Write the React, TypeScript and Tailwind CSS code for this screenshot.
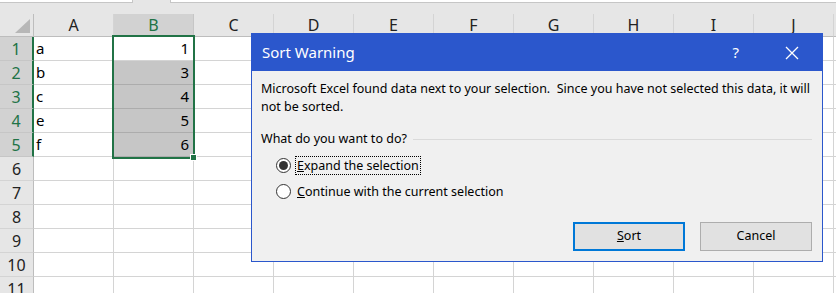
import React from "react";

const cols = ["A", "B", "C", "D", "E", "F", "G", "H", "I", "J", ""];
const rows = [1, 2, 3, 4, 5, 6, 7, 8, 9, 10, 11];

const cellData: Record<number, { a: string; b: string }> = {
  1: { a: "a", b: "1" },
  2: { a: "b", b: "3" },
  3: { a: "c", b: "4" },
  4: { a: "e", b: "5" },
  5: { a: "f", b: "6" },
};

const font = { fontFamily: '"Noto Sans", "Open Sans", sans-serif' };

function Corner() {
  return (
    <div className="relative h-full w-[34px] shrink-0 border-r border-b border-[#bdbdbd] bg-[#e6e6e6]">
      <svg className="absolute left-[15px] top-[5px]" width="15" height="14" viewBox="0 0 15 14">
        <polygon points="15,0 15,14 0,14" fill="#b7b7b7" />
      </svg>
    </div>
  );
}

function Sheet() {
  return (
    <div className="flex flex-col">
      {/* column headers */}
      <div className="flex h-[23px]">
        <Corner />
        {cols.map((c, i) => {
          const sel = c === "B";
          return (
            <div
              key={i}
              className={
                sel
                  ? "flex h-full w-[80px] shrink-0 items-center justify-center border-r border-[#c6c6c6] border-b-2 border-b-[#217346] bg-[#d2d2d2] pt-[1px] text-[16px] text-[#217346]"
                  : "flex h-full w-[80px] shrink-0 items-center justify-center border-r border-[#d4d4d4] border-b border-b-[#bdbdbd] bg-[#e6e6e6] text-[16px] text-[#222]"
              }
            >
              {c}
            </div>
          );
        })}
      </div>
      {rows.map((r) => {
        const selRow = r <= 5;
        const data = cellData[r];
        return (
          <div key={r} className="flex h-[24px]">
            <div
              className={
                selRow
                  ? "flex h-full w-[34px] shrink-0 items-center justify-center border-b border-[#c6c6c6] border-r-2 border-r-[#217346] bg-[#d2d2d2] text-[16px] text-[#217346]"
                  : "flex h-full w-[34px] shrink-0 items-center justify-center border-b border-[#d4d4d4] border-r border-r-[#bdbdbd] bg-[#e6e6e6] text-[16px] text-[#222]"
              }
            >
              {r}
            </div>
            {cols.map((c, i) => {
              let cls =
                "flex h-full w-[80px] shrink-0 items-center border-r border-b border-[#d4d4d4] bg-white px-[2px] text-[15px] text-black";
              let text = "";
              if (data && c === "A") text = data.a;
              if (data && c === "B") {
                text = data.b;
                cls += " justify-end pr-[4px]";
                if (r > 1) cls = cls.replace("bg-white", "bg-[#c6c6c6]").replace("border-[#d4d4d4]", "border-[#acacac]");
              }
              return (
                <div key={i} className={cls}>
                  {text}
                </div>
              );
            })}
          </div>
        );
      })}
    </div>
  );
}

function Radio({ checked }: { checked?: boolean }) {
  return (
    <span className="flex h-[15px] w-[15px] shrink-0 items-center justify-center rounded-full border border-[#333] bg-white">
      {checked && <span className="h-[9px] w-[9px] rounded-full bg-[#333]" />}
    </span>
  );
}

function Dialog() {
  return (
    <div
      className="absolute left-[251px] top-[33px] flex h-[229px] w-[572px] flex-col border border-[#2b57cc] bg-[#f0f0f0]"
      style={font}
    >
      <div className="flex h-[37px] shrink-0 items-center bg-[#2b57cc] text-white">
        <span className="pl-[10px] text-[15px]">Sort Warning</span>
        <span className="ml-auto mr-[46px] text-[15px]">?</span>
        <svg className="mr-[23px]" width="14" height="14" viewBox="0 0 14 14">
          <path d="M1 1 L13 13 M13 1 L1 13" stroke="white" strokeWidth="1.3" />
        </svg>
      </div>
      <div className="px-[9px] pt-[9px] text-[12.5px] leading-[18px] text-black">
        <p className="whitespace-pre">
          Microsoft Excel found data next to your selection.  Since you have not selected this data, it will
        </p>
        <p>not be sorted.</p>
        <div className="mt-[14px] flex items-center">
          <span>What do you want to do?</span>
          <span className="ml-[6px] mr-[1px] h-px flex-1 bg-[#dadada]" />
        </div>
        <div className="mt-[8px] flex flex-col gap-[7px] pl-[15px]">
          <label className="flex items-center gap-[4px]">
            <Radio checked />
            <span className="border border-dotted border-black px-[1px] leading-[17px]">
              <u>E</u>xpand the selection
            </span>
          </label>
          <label className="flex items-center gap-[4px]">
            <Radio />
            <span className="border border-transparent px-[1px] leading-[17px]">
              <u>C</u>ontinue with the current selection
            </span>
          </label>
        </div>
      </div>
      <div className="mt-auto mb-[10px] flex justify-end gap-[15px] pr-[10px]">
        <button className="h-[29px] w-[112px] border-2 border-[#0078d7] bg-[#e1e1e1] text-[12.5px] text-black">
          <u>S</u>ort
        </button>
        <button className="h-[29px] w-[112px] border border-[#adadad] bg-[#e1e1e1] text-[12.5px] text-black">
          Cancel
        </button>
      </div>
    </div>
  );
}

export default function App() {
  return (
    <div className="relative h-[293px] w-[836px] overflow-hidden bg-white" style={font}>
      <div className="flex h-[14px] items-start bg-[#e6e6e6]">
        <div className="h-[3px] w-[133px] border-r border-b border-[#c6c6c6] bg-white" />
        <div className="ml-[37px] h-[3px] flex-1 border-l border-b border-[#c6c6c6] bg-white" />
      </div>
      <Sheet />
      {/* selection outline */}
      <div className="absolute left-[112px] top-[35px] h-[124px] w-[83px] border-2 border-[#217346]" />
      <div className="absolute left-[190px] top-[154px] h-[7px] w-[7px] border border-white bg-[#217346]" />
      <Dialog />
    </div>
  );
}
